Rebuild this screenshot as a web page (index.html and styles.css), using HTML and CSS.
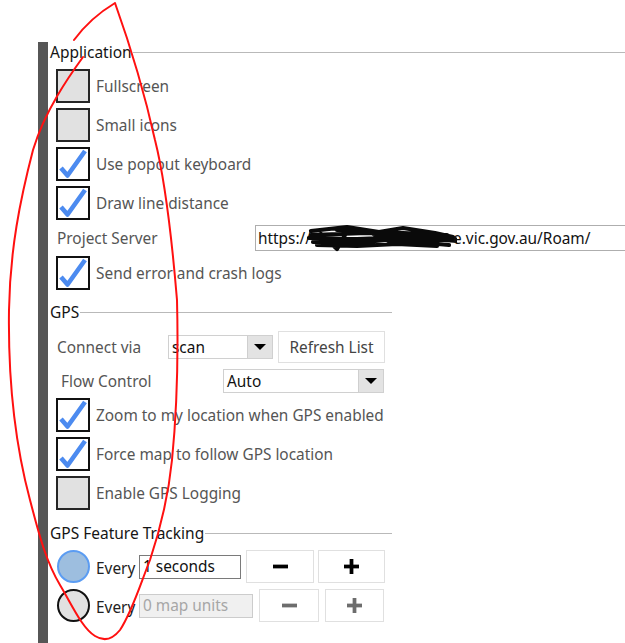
FILE: index.html
```html
<!DOCTYPE html>
<html>
<head>
<meta charset="utf-8">
<link rel="stylesheet" href="styles.css">
</head>
<body>
<div class="page">
  <div class="panel">
    <section class="group group-wide">
      <div class="group-title"><span>Application</span></div>
      <div class="group-body">
        <label class="row"><span class="cb"></span><span class="lbl">Fullscreen</span></label>
        <label class="row"><span class="cb"></span><span class="lbl">Small icons</span></label>
        <label class="row"><span class="cb checked"><svg viewBox="0 0 30 30"><path d="M3 19 L9.5 26.5 L27 2"/></svg></span><span class="lbl">Use popout keyboard</span></label>
        <label class="row"><span class="cb checked"><svg viewBox="0 0 30 30"><path d="M3 19 L9.5 26.5 L27 2"/></svg></span><span class="lbl">Draw line distance</span></label>
        <div class="row row-server"><span class="lbl-plain server-lbl">Project Server</span><div class="server-input">https://<svg class="scribble" viewBox="0 0 150 28" width="150" height="28"><path d="M4 7 L40 3 L72 8 L96 4 L128 9 L146 13 M4 11 L60 9 L110 12 L148 15 M2 14 L50 15 L100 13 L150 17 M6 18 L45 19 L80 16 L120 19 L142 21 M10 21 L50 22 L90 20 L130 22 M14 10 L30 25 L38 11 M58 6 L88 20 L120 8 M20 16 L140 16 M30 6 L140 11"/></svg>e.vic.gov.au/Roam/</div></div>
        <label class="row"><span class="cb checked"><svg viewBox="0 0 30 30"><path d="M3 19 L9.5 26.5 L27 2"/></svg></span><span class="lbl">Send error and crash logs</span></label>
      </div>
    </section>

    <section class="group group-gps group-gap1">
      <div class="group-title"><span>GPS</span></div>
      <div class="group-body gps-body">
        <div class="row row-connect">
          <span class="lbl-plain connect-lbl">Connect via</span>
          <div class="combo combo-scan"><span class="combo-text">scan</span><span class="combo-btn"><span class="tri"></span></span></div>
          <div class="btn refresh">Refresh List</div>
        </div>
        <div class="row row-flow">
          <span class="lbl-plain flow-lbl">Flow Control</span>
          <div class="combo combo-auto"><span class="combo-text">Auto</span><span class="combo-btn"><span class="tri"></span></span></div>
        </div>
        <label class="row"><span class="cb checked"><svg viewBox="0 0 30 30"><path d="M3 19 L9.5 26.5 L27 2"/></svg></span><span class="lbl">Zoom to my location when GPS enabled</span></label>
        <label class="row"><span class="cb checked"><svg viewBox="0 0 30 30"><path d="M3 19 L9.5 26.5 L27 2"/></svg></span><span class="lbl">Force map to follow GPS location</span></label>
        <label class="row"><span class="cb"></span><span class="lbl">Enable GPS Logging</span></label>
      </div>
    </section>

    <section class="group group-gps group-gap2">
      <div class="group-title"><span>GPS Feature Tracking</span></div>
      <div class="group-body track-body">
        <div class="row track-row">
          <span class="radio radio-on"></span>
          <span class="every">Every</span>
          <div class="num-input num-sec">1 seconds</div>
          <div class="btn step step-minus1"><svg viewBox="0 0 16 16" class="glyph"><rect x="0" y="6" width="16" height="4"/></svg></div>
          <div class="btn step step-plus1"><svg viewBox="0 0 16 16" class="glyph"><rect x="0" y="6" width="16" height="4"/><rect x="6" y="0" width="4" height="16"/></svg></div>
        </div>
        <div class="row track-row">
          <span class="radio radio-off"></span>
          <span class="every">Every</span>
          <div class="num-input num-map">0 map units</div>
          <div class="btn step step-minus2"><svg viewBox="0 0 16 16" class="glyph dim"><rect x="0" y="6" width="16" height="4"/></svg></div>
          <div class="btn step step-plus2"><svg viewBox="0 0 16 16" class="glyph dim"><rect x="0" y="6" width="16" height="4"/><rect x="6" y="0" width="4" height="16"/></svg></div>
        </div>
      </div>
    </section>
  </div>

  <svg class="annotation" viewBox="0 0 625 643" width="625" height="643">
    <path d="M83 57 C70 75 45 110 33 150 C20 200 10 250 9 310 C8 380 14 440 30 500 C38 530 45 560 60 585 C72 605 82 628 95 636 C103 641 112 640 120 630 C132 612 140 585 150 560 C160 530 168 500 172 460 C178 400 178 340 177 300 C172 240 165 180 155 140 C145 95 130 45 115 3 C100 12 85 25 74 40"/>
  </svg>
</div>
</body>
</html>
```

FILE: styles.css
```css
html, body {
  margin: 0;
  padding: 0;
  background: #ffffff;
  overflow: hidden;
}

.page {
  position: relative;
  width: 625px;
  height: 643px;
  overflow: hidden;
  font-family: "Noto Sans", "Open Sans", "DejaVu Sans", sans-serif;
  font-size: 15.4px;
}

.panel {
  margin-left: 38px;
  padding-top: 42px;
  height: 601px;
}

.panel > .group {
  border-left: 10px solid #565656;
}

.panel::after {
  content: "";
  display: block;
  width: 10px;
  height: 100px;
  background: #565656;
}

.group-wide {
  width: 577px;
}

.group-gps {
  width: 344px;
}

.group-gap1 {
  padding-top: 12px;
}

.group-gap2 {
  padding-top: 13px;
}

.group-title {
  display: flex;
  align-items: center;
  height: 20px;
  padding-left: 2px;
  color: #151515;
  font-size: 15.5px;
  white-space: nowrap;
}

.group-title::after {
  content: "";
  flex: 1;
  height: 1px;
  background: #b9b9b9;
  margin-left: 1px;
}

.group-body {
  display: flex;
  flex-direction: column;
  gap: 5px;
  padding-top: 7px;
  padding-left: 8px;
}

.row {
  display: flex;
  align-items: center;
  height: 34px;
}

.cb {
  width: 30px;
  height: 30px;
  border: 2px solid #262626;
  background: #e1e1e1;
  flex: none;
  display: flex;
  align-items: center;
  justify-content: center;
}

.cb.checked {
  background: #ffffff;
  border-color: #111111;
}

.cb svg {
  width: 30px;
  height: 30px;
}

.cb svg path {
  fill: none;
  stroke: #4c8bf0;
  stroke-width: 4.6;
  stroke-linejoin: round;
  stroke-linecap: butt;
}

.lbl {
  margin-left: 6px;
  color: #555555;
  white-space: nowrap;
}

.lbl-plain {
  color: #555555;
  margin-left: 1px;
  white-space: nowrap;
}

.row-server {
  height: 26px;
}

.server-lbl {
  width: 198px;
  flex: none;
}

.server-input {
  width: 420px;
  height: 24px;
  border: 1px solid #aeaeae;
  box-sizing: content-box;
  display: flex;
  align-items: center;
  padding-left: 2px;
  color: #111111;
  white-space: nowrap;
  flex: none;
}

.scribble {
  flex: none;
  margin-left: -4px;
  margin-right: -4px;
}

.scribble path {
  fill: none;
  stroke: #0a0a0a;
  stroke-width: 4.2;
  stroke-linejoin: round;
  stroke-linecap: round;
}

.gps-body {
  padding-top: 9px;
  gap: 5px;
}

.row-connect {
  height: 32px;
}

.connect-lbl {
  width: 111px;
}

.combo {
  display: flex;
  align-items: stretch;
  border: 1px solid #d0d0d0;
  box-sizing: border-box;
  background: #ffffff;
}

.combo-text {
  flex: 1;
  display: flex;
  align-items: center;
  padding-left: 3px;
  color: #111111;
}

.combo-btn {
  width: 24px;
  background: #e3e3e3;
  border-left: 1px solid #cfcfcf;
  display: flex;
  align-items: center;
  justify-content: center;
}

.tri {
  width: 0;
  height: 0;
  border-left: 6px solid transparent;
  border-right: 6px solid transparent;
  border-top: 6px solid #000000;
}

.combo-scan {
  width: 105px;
  height: 24px;
}

.btn {
  display: flex;
  align-items: center;
  justify-content: center;
  border: 1px solid #e0e0e0;
  box-sizing: border-box;
  background: #ffffff;
  color: #444444;
}

.refresh {
  margin-left: 5px;
  width: 107px;
  height: 32px;
}

.row-flow {
  height: 24px;
  margin-top: 1px;
}

.flow-lbl {
  margin-left: 5px;
  width: 162px;
}

.combo-auto {
  width: 161px;
  height: 24px;
}

.track-body {
  padding-top: 7px;
  gap: 6px;
  padding-left: 9px;
}

.track-row {
  height: 33px;
}

.radio {
  width: 33px;
  height: 33px;
  border-radius: 50%;
  box-sizing: border-box;
  flex: none;
}

.radio-on {
  background: #9dbedf;
  border: 2px solid #5b9cf2;
}

.radio-off {
  background: #e1e1e1;
  border: 2px solid #111111;
}

.every {
  margin-left: 6px;
  color: #222222;
  width: 43px;
  padding-top: 3px;
}

.num-input {
  display: flex;
  align-items: center;
  box-sizing: border-box;
  height: 24px;
  padding-left: 3px;
  white-space: nowrap;
}

.num-sec {
  width: 102px;
  border: 1px solid #7a7a7a;
  color: #111111;
}

.num-map {
  width: 114px;
  border: 1px solid #cccccc;
  background: #f0f0f0;
  color: #a6a6a6;
}

.step {
  height: 33px;
}

.step-minus1 {
  margin-left: 5px;
  width: 68px;
}

.step-plus1 {
  margin-left: 4px;
  width: 67px;
}

.step-minus2 {
  margin-left: 6px;
  width: 60px;
}

.step-plus2 {
  margin-left: 6px;
  width: 59px;
}

.glyph {
  width: 15px;
  height: 15px;
  fill: #000000;
}

.glyph.dim {
  fill: #6d6d6d;
}

.annotation {
  position: absolute;
  left: 0;
  top: 0;
  pointer-events: none;
}

.annotation path {
  fill: none;
  stroke: #ff1010;
  stroke-width: 2;
  stroke-linecap: round;
  stroke-linejoin: round;
}
```
